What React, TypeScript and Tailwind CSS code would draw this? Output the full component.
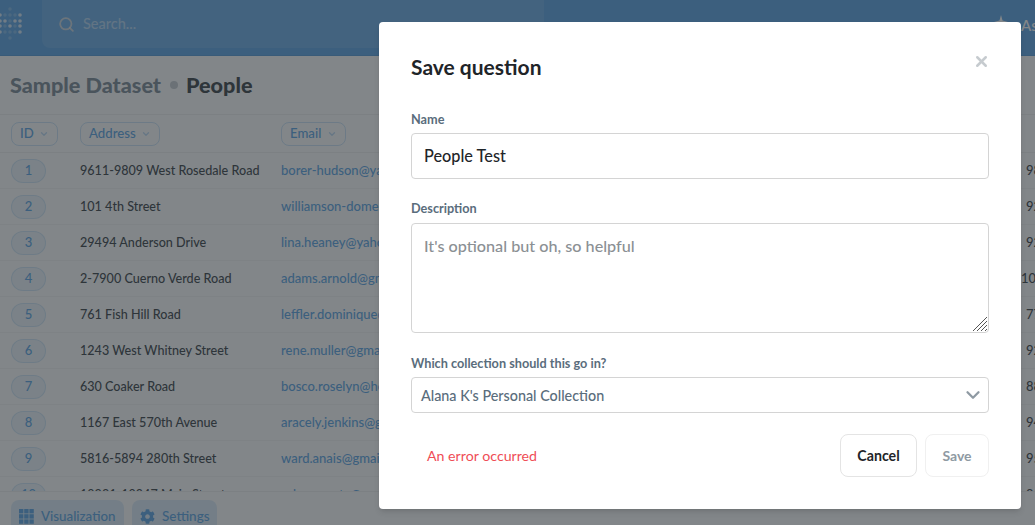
import { ChevronDown, Search, X } from "lucide-react";
import { FaCog } from "react-icons/fa";

const rows = [
  ["1", "9611-9809 West Rosedale Road", "borer-hudson@yahoo.com", "98"],
  ["2", "101 4th Street", "williamson-domenica@yahoo.com", "92"],
  ["3", "29494 Anderson Drive", "lina.heaney@yahoo.com", "92"],
  ["4", "2-7900 Cuerno Verde Road", "adams.arnold@gmail.com", "10-"],
  ["5", "761 Fish Hill Road", "leffler.dominique@hotmail.com", "77"],
  ["6", "1243 West Whitney Street", "rene.muller@gmail.com", "92"],
  ["7", "630 Coaker Road", "bosco.roselyn@hotmail.com", "88"],
  ["8", "1167 East 570th Avenue", "aracely.jenkins@gmail.com", "94"],
  ["9", "5816-5894 280th Street", "ward.anais@gmail.com", "95"],
  ["10", "10881-10947 Main Street", "rohan.marty@gmail.com", "91"],
];

// the dots of the logo: [x, y, bright]
const dots: [number, number, boolean][] = [
  [10, 9, false],
  [0, 15, true], [5, 15, false], [10, 15, false], [15, 15, false], [20, 15, true],
  [0, 21, true], [5, 21, true], [10, 21, false], [15, 21, true], [20, 21, true],
  [0, 26, true], [5, 26, false], [10, 26, true], [15, 26, false], [20, 26, true],
  [0, 32, true], [5, 32, false], [10, 32, false], [15, 32, false], [20, 32, true],
  [10, 38, false],
];

const Logo = () => (
  <svg width="23" height="42" viewBox="0 0 23 42" className="block">
    {dots.map(([x, y, bright]) => (
      <circle key={`${x}-${y}`} cx={x} cy={y} r="1.8" fill="#fff" opacity={bright ? 0.75 : 0.22} />
    ))}
  </svg>
);

const GridIcon = () => (
  <svg width="15" height="15" viewBox="0 0 15 15" fill="#509ee3">
    {[0, 5.2, 10.4].map((x) =>
      [0, 5.2, 10.4].map((y) => <rect key={`${x}-${y}`} x={x} y={y} width="4.4" height="4.4" />)
    )}
  </svg>
);

const HeaderButton = ({ label, width }: { label: string; width: string }) => (
  <div className={`${width} h-[24px] flex items-center justify-between pl-[8px] pr-[8px] border border-[#509ee3]/30 rounded-lg text-[#509ee3] text-[13.2px] font-medium`}>
    {label}
    <ChevronDown size={10} className="opacity-40" strokeWidth={3} />
  </div>
);

export default function App() {
  return (
    <div className="relative w-[1035px] h-[525px] overflow-hidden bg-white font-['Lato','Liberation_Sans',sans-serif]">
      <header className="relative h-[56px] bg-[#509ee3] flex items-start border-b border-[#4a94d6]">
        <div className="w-[42px] shrink-0"><Logo /></div>
        <div className="w-[502px] shrink-0 h-[48px] bg-white/10 rounded-b-lg flex items-center pl-4 gap-2 text-white/50">
          <Search size={17} strokeWidth={2.5} className="text-[#f0e4d8]/70" />
          <span className="text-[14.5px] font-medium">Search...</span>
        </div>
        <svg width="14" height="14" viewBox="0 0 24 24" fill="#fff" className="ml-[450px] mt-[15px] shrink-0">
          <path d="M12 0l2.6 9.4L24 12l-9.4 2.6L12 24l-2.6-9.4L0 12l9.4-2.6z" />
        </svg>
        <span className="ml-[13px] mt-[14px] text-[15px] font-medium text-white">Ask</span>
      </header>

      <h1 className="h-[59px] pl-[10px] flex items-center text-[21.6px] font-black text-[#74838f] border-b border-[#f0f0f0]">
        Sample Dataset
        <span className="w-[8px] h-[8px] ml-[9px] mr-[8px] rounded-full bg-[#c5cbd0]" />
        <span className="text-[#2e353b]">People</span>
      </h1>

      <div className="h-[38px] flex items-center pl-[11px] border-b border-[#f0f0f0]">
        <div className="w-[69px]"><HeaderButton label="ID" width="w-[47px]" /></div>
        <div className="w-[201px]"><HeaderButton label="Address" width="w-[80px]" /></div>
        <HeaderButton label="Email" width="w-[65px]" />
      </div>

      <div className="h-[338px] overflow-hidden">
        {rows.map(([id, address, email, last]) => (
          <div key={id} className="relative h-[36px] flex items-center pl-[11px] border-b border-[#f5f5f5] text-[13px] font-medium whitespace-nowrap">
            <div className="w-[69px]">
              <span className="flex items-center justify-center w-[35px] h-[24px] rounded-xl border border-[#509ee3]/20 bg-[#509ee3]/10 text-[#509ee3]">{id}</span>
            </div>
            <div className="w-[201px] pt-[1px] text-[12.6px] text-[#2e353b]">{address}</div>
            <div className="w-[98px] overflow-hidden text-[#509ee3]">{email}</div>
            <div className={`absolute text-[#2e353b] ${id === "4" ? "left-[1021px]" : "left-[1026px]"}`}>{last}</div>
          </div>
        ))}
      </div>

      <footer className="relative h-[34px] bg-white flex items-start pt-[8px] pl-[11px] gap-2 border-t border-[#f0f0f0]">
        <div className="w-[113px] h-[33px] bg-[#509ee3]/20 rounded-t-lg flex items-center pl-2 gap-[7px] text-[#509ee3] text-[13.3px] font-medium">
          <GridIcon />
          Visualization
        </div>
        <div className="w-[85px] h-[33px] bg-[#509ee3]/20 rounded-t-lg flex items-center pl-2 gap-[7px] text-[#509ee3] text-[13.5px] font-medium">
          <FaCog size={15} />
          Settings
        </div>
      </footer>

      <div className="absolute inset-0 bg-[#2e353b]/60" />

      <div className="absolute left-[379px] top-[22px] w-[642px] h-[487px] bg-white rounded shadow-md px-[32px] text-[#1f2529]">
        <div className="relative pt-[31px] h-[85px]">
          <h2 className="text-[21px] leading-[27px] font-bold">Save question</h2>
          <X size={17} strokeWidth={3.5} className="absolute right-[-1px] top-[31px] text-[#c6cbcf]" />
        </div>

        <label className="block text-[12.7px] leading-[16px] mt-[4px] font-bold text-[#5a6d7c]">Name</label>
        <div className="mt-[6px] h-[46px] border border-[#d4d4d4] rounded flex items-center pl-[12px] pt-[1px] text-[16.3px] font-medium">People Test</div>

        <label className="block text-[12.7px] leading-[16px] mt-[21px] font-bold text-[#5a6d7c]">Description</label>
        <div className="relative mt-[7px]">
          <textarea
            readOnly
            placeholder="It's optional but oh, so helpful"
            className="block w-full h-[110px] resize-none border border-[#d4d4d4] rounded px-[12px] py-[10px] text-[16.2px] font-medium placeholder:text-[#8b9094] outline-none"
          />
          <svg width="14" height="14" viewBox="0 0 14 14" stroke="#555" strokeWidth="1" className="absolute right-[2px] bottom-[2px]">
            <path d="M0 14L14 0M4 14L14 4M8 14L14 8M12 14L14 12" />
          </svg>
        </div>

        <label className="block text-[12.7px] leading-[16px] mt-[22px] font-bold text-[#5a6d7c]">Which collection should this go in?</label>
        <div className="mt-[6px] h-[36px] border border-[#d4d4d4] rounded flex items-center justify-between pl-[9px] pr-[4px] text-[14.35px] font-medium text-[#5a6d7c]">
          <span className="pt-[1px]">Alana K's Personal Collection</span>
          <ChevronDown size={22} strokeWidth={2.5} className="text-[#8f9aa3]" />
        </div>

        <div className="mt-[21px] flex items-center">
          <span className="ml-[16px] text-[14.2px] text-[#ef4d56]">An error occurred</span>
          <button className="ml-auto w-[77px] h-[43px] border border-[#e4e4e4] rounded-lg text-[14.2px] font-bold">Cancel</button>
          <button className="ml-[8px] w-[64px] h-[43px] border border-[#f0f0f0] rounded-lg text-[14px] font-bold text-[#8f9aa3]">Save</button>
        </div>
      </div>
    </div>
  );
}
